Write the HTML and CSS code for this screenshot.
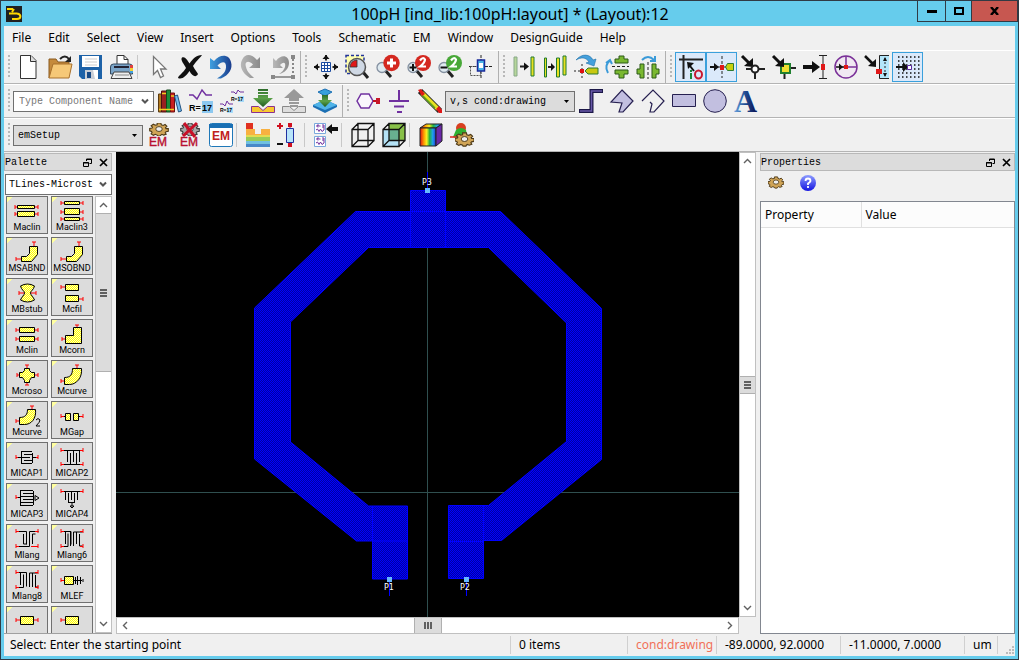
FILE: index.html
```html
<!DOCTYPE html>
<html lang="en">
<head>
<meta charset="utf-8">
<title>100pH [ind_lib:100pH:layout] * (Layout):12</title>
<link rel="stylesheet" href="styles.css">
</head>
<body>
<svg class="defs" width="0" height="0" aria-hidden="true">
  <defs>
    <pattern id="ydot" width="2" height="2" patternUnits="userSpaceOnUse"><rect width="2" height="2" fill="#fffcc0"/><path d="M0 0h1v1H0zM1 1h1v1H1z" fill="#ffff00"/></pattern>
    <linearGradient id="blueArrow" x1="0" x2="1"><stop offset="0" stop-color="#3fa0e0"/><stop offset="1" stop-color="#1a3c8c"/></linearGradient>
    <linearGradient id="grayArrow" x1="0" x2="1"><stop offset="0" stop-color="#b8b8b8"/><stop offset="1" stop-color="#8a8a8a"/></linearGradient>
    <linearGradient id="rainbow" x1="0" x2="1"><stop offset="0" stop-color="#e01010"/><stop offset=".25" stop-color="#ffa000"/><stop offset=".42" stop-color="#f8f020"/><stop offset=".6" stop-color="#20b040"/><stop offset=".8" stop-color="#20a0f0"/><stop offset="1" stop-color="#2030d0"/></linearGradient>
    <linearGradient id="greenDown" x1="0" x2="0" y1="0" y2="1"><stop offset="0" stop-color="#2c6b2a"/><stop offset=".5" stop-color="#5da34a"/><stop offset="1" stop-color="#1f5a1e"/></linearGradient>
    <linearGradient id="letterA" x1="0" x2="1"><stop offset="0" stop-color="#6aa6e0"/><stop offset=".5" stop-color="#204a90"/><stop offset="1" stop-color="#0a1050"/></linearGradient>
    <linearGradient id="helpBlue" x1="0" x2="0" y1="0" y2="1"><stop offset="0" stop-color="#8d9cff"/><stop offset="1" stop-color="#1414e0"/></linearGradient>
    <symbol id="gear" viewBox="0 0 20 14"><path d="M8 0h4l.5 2 2 .6 2-1 2 2-1.500 1.400.5 1H20v3l-2.500.5-.8 1 1 1.500-2.700 1-2-.8-1 .8-.5 1h-3l-.5-1-2-.8-2 1-2.500-1.500 1-1.500-.5-1L0 8.500V6l2.500-.5.5-1L1.500 3l2.500-1.700 2 1L8 2z" fill="#d0a456" stroke="#4d3a18" stroke-width="1.200"/><ellipse cx="10" cy="6.500" rx="3.500" ry="2.600" fill="#efefef" stroke="#4d3a18"/></symbol>
    <symbol id="float" viewBox="0 0 9 9"><path d="M3.500 3V1h5v4.500h-2M3 1.500h6" fill="none" stroke="#000"/><path d="M.5 4.500h5v4h-5zM0 5h6" fill="none" stroke="#000"/></symbol>
    <symbol id="cross" viewBox="0 0 9 9"><path d="M1 1l7 7M8 1L1 8" stroke="#000" stroke-width="1.700"/></symbol>
    <symbol id="up" viewBox="0 0 9 6"><path d="M1 5l3.500-3.500L8 5" fill="none" stroke="#606060" stroke-width="1.400"/></symbol>
    <symbol id="down" viewBox="0 0 9 6"><path d="M1 1l3.500 3.500L8 1" fill="none" stroke="#606060" stroke-width="1.400"/></symbol>
    <symbol id="zoomGlass" viewBox="0 0 24 24"><path d="M9 15l6 7" stroke="#222" stroke-width="3"/><circle cx="6" cy="12.500" r="5" fill="#dfeaf0" stroke="#8490a0" stroke-width="1.300"/></symbol>
    <symbol id="mini" viewBox="0 0 12 11"><path d="M.5.5h11v10H.5z" fill="#fff" stroke="#7aa8dc"/><path d="M2 3h2v-1.500v3M5 3h1.500M8 2h2M8 4h2M10 2v5M2 7l1.500-1L5 8.500 6.500 6 8 8.500 10 7" fill="none" stroke="#7030a0"/></symbol>
  </defs>
</svg>

<div class="window">
  <header class="titlebar">
    <svg class="appicon" width="16" height="16" viewBox="0 0 16 16"><path d="M0 0h16v16H0z" fill="#202020"/><path d="M1 3h6M3 7.500h8M8 3l-2 3M11 7.500c5 1 4 5.500 0 5.500H6" fill="none" stroke="#ffd800" stroke-width="2"/></svg>
    <h1 class="title">100pH [ind_lib:100pH:layout] * (Layout):12</h1>
    <div class="winbtns">
      <button class="wb min" aria-label="Minimize"><svg width="10" height="3"><path d="M0 0h10v3H0z"/></svg></button>
      <button class="wb max" aria-label="Maximize"><svg width="10" height="8"><path d="M1 1h8v6H1z" fill="none" stroke="#000" stroke-width="2"/></svg></button>
      <button class="wb close" aria-label="Close"><svg width="9" height="8"><path d="M1 0l7 8M8 0L1 8" stroke="#000" stroke-width="2.400"/></svg></button>
    </div>
  </header>

  <div class="client">
  <nav class="menubar">
    <button>File</button><button>Edit</button><button>Select</button><button>View</button><button>Insert</button><button>Options</button><button>Tools</button><button>Schematic</button><button>EM</button><button>Window</button><button>DesignGuide</button><button>Help</button>
  </nav>

  <div class="toolrow">
    <div class="group">
      <button class="tb" aria-label="New"><svg viewBox="0 0 24 24"><path d="M3.500.5H14l5 5v18H3.500z" fill="#fff" stroke="#333"/><path d="M13.500.5v6H19" fill="#ddd" stroke="#333"/></svg></button>
      <button class="tb" aria-label="Open"><svg viewBox="0 0 24 24"><path d="M1 23V4h7l2 3h11v4" fill="#c58a3c" stroke="#8a5a20"/><path d="M1 23l4-14h19l-3 14z" fill="#f6c877" stroke="#a8702c"/><path d="M12 4q5-5 9 0" fill="none" stroke="#222" stroke-width="2"/><path d="M23 1v6h-6z" fill="#222"/></svg></button>
      <button class="tb" aria-label="Save"><svg viewBox="0 0 24 24"><path d="M0 0h23v24H3l-3-3z" fill="#1d62a8"/><path d="M3 1h17v11H3z" fill="#fff"/><path d="M6 4h12M6 7h12M6 10h12" stroke="#ccc"/><path d="M6 15h13v9H6z" fill="#c9ced6"/><path d="M8 17h4v6H8z" fill="#174a86"/><path d="M14 15h5v9h-3z" fill="#fff"/></svg></button>
      <button class="tb" aria-label="Print"><svg viewBox="0 0 24 24"><path d="M7 10V.5h7l4 4V10" fill="#fff" stroke="#333"/><path d="M14 .5v4h4" fill="none" stroke="#333"/><path d="M.5 12q0-3 3-3h16q3 0 3 3v7H.5z" fill="#7aa4c8" stroke="#34495e"/><path d="M4 11h15v2H4z" fill="#223"/><path d="M20 10h3v3h-3z" fill="#e04040"/><path d="M20 13h3v3h-3z" fill="#f0d030"/><path d="M20 16h3v2h-3z" fill="#40a0e0"/><path d="M4 17h15l3 6.500H1z" fill="#eee" stroke="#444"/><path d="M5 20h14" stroke="#888"/></svg></button>
      <span class="sep"></span>
      <button class="tb" aria-label="Select"><svg viewBox="0 0 24 24"><path d="M6.500 1.500v18l4-4 3 7 3-1.500-3-7H19z" fill="#fff" stroke="#777" stroke-width="1.300"/></svg></button>
      <button class="tb" aria-label="Delete"><svg viewBox="0 0 24 24"><path d="M4 2.500c3-1.500 5 2 7.500 6C15 4 18 0 24 0c-1 2-5 5-9 11 2 4 4 6 5 8-2 4-6 2-8.500-3C8 21 4 25 0 23c0-2 5-5 8-10C6 9 2 5 4 2.500z" fill="#111"/></svg></button>
      <button class="tb" aria-label="Undo"><svg viewBox="0 0 24 24"><path d="M1 3v11h11L8.500 10.500c5-5 9-4 8.500 2-.5 5-4 8-9 11h4C20 20 24 14 22 7 20-1 11-1 5 6z" fill="url(#blueArrow)"/></svg></button>
      <button class="tb" aria-label="Redo"><svg viewBox="0 0 24 24"><path d="M20 2v11H9l4-3.500C9 5 4 6 6 12c1 5 5 8 8 11h-4C2 18-1 11 2 5 5-2 12-1 17 5z" fill="url(#grayArrow)"/></svg></button>
      <button class="tb" aria-label="Undo to point"><svg viewBox="0 0 24 24"><path d="M2 3v10h10L9 10c4-4 6-2 5 2-1 3-3 5-6 7 6-1 10-6 10-11C18 0 10-1 5 6z" fill="url(#grayArrow)"/><path d="M2 22h20" stroke="#999" stroke-width="2"/><path d="M22 4v18" stroke="#888" stroke-width="2" stroke-dasharray="2 2"/><path d="M0 20h4v4H0zM20 20h4v4h-4zM20 0h4v4h-4z" fill="#888"/></svg></button>
    </div>
    <div class="group">
      <button class="tb" aria-label="View all"><svg viewBox="0 0 24 24"><path d="M12 0v24M0 12h24" stroke="#222" stroke-width="2"/><path d="M8.500 4L12 0l3.500 4zM8.500 20l3.500 4 3.500-4zM4 8.500L0 12l4 3.500zM20 8.500l4 3.500-4 3.500z" fill="#111"/><path d="M5.500 5.500h13v13h-13z" fill="#efefef"/><path d="M7.500 7.500h9v9h-9zM10.500 7v10M13.500 7v10M7 10.500h10M7 13.500h10" fill="#fff" stroke="#1a4aa0"/></svg></button>
      <button class="tb" aria-label="Zoom area"><svg viewBox="0 0 24 24"><path d="M1 .5h18v18H1z" fill="#ffffb0" stroke="#223399" stroke-width="1.500" stroke-dasharray="3 2"/><path d="M18 17l5 6" stroke="#222" stroke-width="3"/><circle cx="12" cy="12" r="8.500" fill="#cfd8e4" stroke="#555" stroke-width="1.500"/><path d="M12 12V5a7 7 0 0 0-7 7z" fill="#e01818" stroke="#333" stroke-width=".8"/></svg></button>
      <button class="tb" aria-label="Zoom in"><svg viewBox="0 0 24 24"><use href="#zoomGlass"/><circle cx="15.500" cy="8" r="8.200" fill="#d42820"/><path d="M15.500 3.500v9M11 8h9" stroke="#fff" stroke-width="3"/></svg></button>
      <button class="tb" aria-label="Zoom in 2x"><svg viewBox="0 0 24 24"><use href="#zoomGlass"/><circle cx="16" cy="8" r="8" fill="#d42820"/><path d="M2.500 12.500h7M6 9v7" stroke="#111" stroke-width="2"/><path d="M13 5.500q3-4 5-1 0 3-5 7h6" fill="none" stroke="#fff" stroke-width="2.200"/></svg></button>
      <button class="tb" aria-label="Zoom out 2x"><svg viewBox="0 0 24 24"><use href="#zoomGlass"/><circle cx="16" cy="8" r="8" fill="#48a838"/><path d="M2.500 12.500h7" stroke="#111" stroke-width="2"/><path d="M13 5.500q3-4 5-1 0 3-5 7h6" fill="none" stroke="#fff" stroke-width="2.200"/></svg></button>
      <button class="tb" aria-label="Center on point"><svg viewBox="0 0 24 24"><path d="M12 0v24M0 11.500h24" stroke="#222" stroke-dasharray="3 1"/><path d="M1.500 11.500h10v9h-10z" fill="none" stroke="#555" stroke-dasharray="2 1"/><path d="M8.500 5h7v11h-7z" fill="#49b4e8" stroke="#1a2a9a" stroke-width="1.500"/><path d="M10 8h4v5h-4z" fill="#fff"/></svg></button>
    </div>
    <div class="group">
      <button class="tb" aria-label="Copy offset"><svg viewBox="0 0 24 24"><path d="M2 2h3v19H2z" fill="#b6d69a" stroke="#88a888"/><path d="M19 2h3v19h-3z" fill="#e8e020" stroke="#1f7a30"/><path d="M8 11.500h6" stroke="#222" stroke-width="2"/><path d="M12 7.500l5 4-5 4z" fill="#111"/></svg></button>
      <button class="tb" aria-label="Copy repeat"><svg viewBox="0 0 24 24"><path d="M1.500 3h2v19h-2zM13.500 3h3v19h-3zM20 1h3v19h-3z" fill="#e8e020" stroke="#1f7a30"/><path d="M5 12h5" stroke="#222" stroke-width="2"/><path d="M8 8l4 4-4 4z" fill="#111"/></svg></button>
      <button class="tb" aria-label="Rotate"><svg viewBox="0 0 24 24"><path d="M2 5C8-2 16-1 19 5l3-1-2 7-8-3 3-1C12 2 7 2 2 5z" fill="#45a0dc" stroke="#2070a8" stroke-width=".6"/><path d="M0 16h8M8 9v14" stroke="#222" stroke-dasharray="2 2"/><path d="M14 13h10v6H14l-3-3z" fill="#c8c810" stroke="#2d7a30"/><path d="M6 14h4v4H6z" fill="#e01010"/></svg></button>
      <button class="tb" aria-label="Mirror about X"><svg viewBox="0 0 24 24"><path d="M6 5C1 8 0 13 3 18M1 8l4-3 2 4" fill="none" stroke="#3a9ad8" stroke-width="2"/><path d="M7 11.500h17" stroke="#222" stroke-dasharray="3 2"/><path d="M10 4h4V1h5v3h4v4H10zM10 15h13v4h-4v4h-5v-4h-4z" fill="#7ab830" stroke="#2d5a18"/></svg></button>
      <button class="tb" aria-label="Mirror about Y"><svg viewBox="0 0 24 24"><path d="M6 5q6-6 12 0M19 1v5h-5" fill="none" stroke="#3a9ad8" stroke-width="2"/><path d="M12 7v17" stroke="#222" stroke-dasharray="3 2"/><path d="M4 9h4v14H4v-4H1v-5h3zM16 9h4v5h3v5h-3v4h-4z" fill="#7ab830" stroke="#2d5a18"/></svg></button>
    </div>
    <div class="group last">
      <button class="tb on" aria-label="Snap entry origin"><svg viewBox="0 0 24 24"><path d="M0 4.500h24M4.500 0v24" stroke="#222" stroke-width="2"/><path d="M15 16l-4-5" stroke="#111" stroke-width="2"/><path d="M8 7l7 1-6 6z" fill="#111"/><path d="M12 15v2M12 18v6" stroke="#18863a" stroke-width="2"/><ellipse cx="19.500" cy="19.500" rx="3.500" ry="4" fill="none" stroke="#c81830" stroke-width="2"/></svg></button>
      <button class="tb on" aria-label="Snap to pin"><svg viewBox="0 0 24 24"><path d="M12 1v22" stroke="#222" stroke-dasharray="3 2"/><path d="M0 12h24" stroke="#222"/><path d="M0 11h4V8l5 4-5 4v-3H0z" fill="#111"/><path d="M17.500 8.500h6v7h-6l-2-3.500z" fill="#c8d010" stroke="#2d7a30"/><path d="M10 10h4v5h-4z" fill="#e01818"/></svg></button>
      <button class="tb" aria-label="Snap to vertex"><svg viewBox="0 0 24 24"><path d="M14 14v10M5 14h19" stroke="#222" stroke-width="2"/><path d="M1 1l8 8" stroke="#111" stroke-width="3"/><path d="M12 12V3L3 11z" fill="#111"/><circle cx="14" cy="14" r="3.500" fill="#fff" stroke="#222" stroke-width="2"/></svg></button>
      <button class="tb" aria-label="Snap to edge"><svg viewBox="0 0 24 24"><path d="M12.500 14v10M12 13h12" stroke="#222" stroke-width="2"/><path d="M1 1l8 8" stroke="#111" stroke-width="3"/><path d="M9 9h9v9H9z" fill="#f0e030" stroke="#208030" stroke-width="2"/><path d="M12 12V3L3 11z" fill="#111"/></svg></button>
      <button class="tb" aria-label="Snap to midpoint"><svg viewBox="0 0 24 24"><path d="M16 .5h8M16 23.500h8M20 0v24" stroke="#222"/><path d="M0 10h9V6l8 6-8 6v-4H0z" fill="#111"/><path d="M18 9h4v6h-4z" fill="#e01818"/></svg></button>
      <button class="tb" aria-label="Snap to center"><svg viewBox="0 0 24 24"><circle cx="12" cy="12" r="11" fill="#f0e8f2" stroke="#7a3098" stroke-width="1.500"/><path d="M12 1v11h11" fill="none" stroke="#7a3098" stroke-width="1.500"/><path d="M2 12h8" stroke="#111" stroke-width="1.500"/><path d="M5 8.500l4 3.500-4 3.500z" fill="#111"/><path d="M10 10h4v4h-4z" fill="#e01818"/></svg></button>
      <button class="tb" aria-label="Snap to intersection"><svg viewBox="0 0 24 24"><path d="M24 .5h-9.500v23H24" fill="#b4e6fa" stroke="#222"/><path d="M20 3v18" stroke="#222" stroke-dasharray="2 2"/><path d="M18 6l2-4 2 4zM18 18l2 4 2-4z" fill="#111"/><path d="M0 1l8 8" stroke="#111" stroke-width="2.500"/><path d="M11 12V4L3 11z" fill="#111"/><path d="M11 14h6v5h-6z" fill="#e01818"/></svg></button>
      <button class="tb on" aria-label="Snap to grid"><svg viewBox="0 0 24 24"><path d="M2 1h22M2 5h22M2 9h22M2 13h22M2 17h22M2 21h22" transform="translate(0 1)" stroke="#111" stroke-width="1.500" stroke-dasharray="1.500 2.500"/><path d="M0 11h7V7l5 5-5 5v-4H0z" fill="#111"/><path d="M11.500 10.500h4v4h-4z" fill="#fff" stroke="#5a28a0"/></svg></button>
    </div>
  </div>

  <div class="toolrow">
    <div class="group">
      <select class="combo editable" aria-label="Component name"><option>Type Component Name</option></select>
      <button class="tb" aria-label="Library"><svg viewBox="0 0 24 24"><path d="M.5 5h3v18h-3z" fill="#b07820" stroke="#5a3a10"/><path d="M3.500 2h5v21h-5z" fill="#9a2020" stroke="#4a1010"/><path d="M8.500 1h4v22h-4z" fill="#1a8a38" stroke="#104818"/><path d="M12.500 4h4v19h-4z" fill="#c82020" stroke="#701010"/><path d="M16.500 7l3-1 4 16-3 1z" fill="#70bcec" stroke="#205080"/><path d="M4 4.500h4M13 7h3M1 20.500h15" stroke="#f0d020" stroke-width="1.500"/></svg></button>
      <button class="tb" aria-label="Parameter labels"><svg viewBox="0 0 24 24"><path d="M0 6h4l4 4 5-9 4 5h6" fill="none" stroke="#7030a0" stroke-width="1.500"/><path d="M13 12h11v12H13z" fill="#8cc8f0"/><text x="0" y="22" class="t9">R=</text><text x="13" y="22" class="t9">17</text></svg></button>
      <button class="tb" aria-label="Swap labels"><svg viewBox="0 0 24 24"><path d="M11 3h3l2 2 2-4 2 2h4M0 15h3l2 2 2-5 2 3h4" fill="none" stroke="#7030a0"/><path d="M18 7h6v6h-6zM7 18h6v6H7z" fill="#a8dcf8"/><text x="11" y="12" class="t6">R=17</text><text x="0" y="23" class="t6">R=17</text></svg></button>
      <button class="tb" aria-label="Push into hierarchy"><svg viewBox="0 0 24 24"><path d="M.5 17.500h7l4.500 4 4.500-4h7v6H.5z" fill="#f8c830" stroke="#8a3090"/><path d="M7 0h10v2H7zM7 3h10v2H7zM7 6h10v3h5L12 18 2 9h5z" fill="url(#greenDown)"/></svg></button>
      <button class="tb" aria-label="Pop out of hierarchy"><svg viewBox="0 0 24 24"><path d="M.5 17.500h7l4.500 4 4.500-4h7v6H.5z" fill="#ddd" stroke="#888"/><path d="M12 0l10 9h-5v3H7V9H2zM7 13h10v2H7zM8 16h8v2H8z" fill="#999"/></svg></button>
      <button class="tb" aria-label="Insert substrate"><svg viewBox="0 0 24 24"><path d="M0 16l9-4h6l9 4v2l-12 6L0 18z" fill="#1c70b4"/><path d="M0 16l9-4h6l9 4-12 5z" fill="#50b4e8"/><path d="M5 3l7-3 7 3-7 4z" fill="#38a0dc" stroke="#1c70b4"/><path d="M9 6h6v5h4l-7 7-7-7h4z" fill="url(#greenDown)"/></svg></button>
    </div>
    <div class="group last">
      <button class="tb" aria-label="Insert pin"><svg viewBox="0 0 24 24"><path d="M1 12l4-7h8l4 7-4 7H5z" fill="#faf6fc" stroke="#7030a0" stroke-width="1.500"/><path d="M17 12h7" stroke="#c01020" stroke-width="2"/><path d="M20 9h4v6h-4z" fill="#c81828"/></svg></button>
      <button class="tb" aria-label="Insert ground"><svg viewBox="0 0 24 24"><path d="M12 1v10M2 12h20M7 17.500h10M10 23h5" stroke="#7030a0" stroke-width="2"/></svg></button>
      <button class="tb" aria-label="Insert trace"><svg viewBox="0 0 24 24"><path d="M2 2l20 20" stroke="#222" stroke-width="6"/><path d="M4 4l16 16" stroke="#e8e020" stroke-width="4"/><path d="M4 6l13 13" stroke="#58a020" stroke-width="1.500"/><path d="M0 1l3-1 4 5-3 2zM18 20l3-3 3 4v3h-3z" fill="#e01818"/></svg></button>
      <select class="combo gray" aria-label="Entry layer"><option>v,s cond:drawing</option></select>
      <button class="tb" aria-label="Insert path"><svg viewBox="0 0 24 24"><path d="M0 22h12.500V2H24" fill="none" stroke="#1c1848" stroke-width="4"/><path d="M1 22h11.500V2H23" fill="none" stroke="#6858a8" stroke-width="1.500"/></svg></button>
      <button class="tb" aria-label="Insert polygon"><svg viewBox="0 0 24 24"><path d="M12 1l11 11-10 11H9l3-9-11-1z" fill="#c2bfe0" stroke="#262050" stroke-width="1.200"/></svg></button>
      <button class="tb" aria-label="Insert polyline"><svg viewBox="0 0 24 24"><path d="M1 12L12 1l11 11-10 11H9l2-8-2-2" fill="none" stroke="#262050" stroke-width="1.200"/></svg></button>
      <button class="tb" aria-label="Insert rectangle"><svg viewBox="0 0 24 24"><path d="M.5 5.500h23v12H.5z" fill="#c2bfe0" stroke="#262050"/></svg></button>
      <button class="tb" aria-label="Insert circle"><svg viewBox="0 0 24 24"><circle cx="12" cy="12" r="11.300" fill="#c2bfe0" stroke="#262050"/></svg></button>
      <button class="tb" aria-label="Insert text"><svg viewBox="0 0 24 24"><text x="0" y="23" class="tA">A</text></svg></button>
    </div>
  </div>

  <div class="toolrow">
    <div class="group last">
      <select class="combo gray" aria-label="EM setup"><option>emSetup</option></select>
      <button class="tb" aria-label="EM setup"><svg viewBox="0 0 24 24"><use href="#gear" x="2" y="0" width="20" height="13"/><text x="2" y="23" class="tEM">EM</text></svg></button>
      <button class="tb" aria-label="Stop EM"><svg viewBox="0 0 24 24"><use href="#gear" class="dim" x="2" y="0" width="20" height="13"/><path d="M6 0l11 14M19 0L5 13" stroke="#c81028" stroke-width="3"/><text x="2" y="23" class="tEM">EM</text></svg></button>
      <button class="tb" aria-label="EM results"><svg viewBox="0 0 24 24"><rect x=".5" y=".5" width="23" height="23" rx="2" fill="#fff" stroke="#1f78b8"/><path d="M0 1h24v4H0z" fill="#1a70b4"/><text x="3" y="17" class="tEMb">EM</text></svg></button>
      <span class="sep"></span>
      <button class="tb" aria-label="Substrate"><svg viewBox="0 0 24 24"><path d="M0 0h7v6H0z" fill="#e03020"/><path d="M0 6h9v5h6V6h9v8H0z" fill="#f8b040"/><path d="M0 12h24v2H0z" fill="#e4dc50"/><path d="M0 14h24v4H0z" fill="#98cc58"/><path d="M0 18h24v3H0z" fill="#70c0e0"/><path d="M0 21h24v3H0z" fill="#4888c8"/></svg></button>
      <button class="tb" aria-label="Ports"><svg viewBox="0 0 24 24"><path d="M0 3h6M3 0v6" stroke="#d01020" stroke-width="2"/><path d="M0 21h6" stroke="#111" stroke-width="2"/><path d="M13 0v24" stroke="#c02030"/><path d="M9.500 5.500h7v14h-7z" fill="#b8e4fa" stroke="#2030a0"/><path d="M11 0h4v4h-4zM11 20h4v4h-4z" fill="#d01020"/></svg></button>
      <span class="sep"></span>
      <button class="tb" aria-label="Create model"><svg viewBox="0 0 24 24"><use href="#mini" x="0" y="0" width="12" height="11"/><use href="#mini" x="0" y="13" width="12" height="11"/><path d="M12 6l6-5v3h6v4h-6v3z" fill="#111"/></svg></button>
      <span class="sep"></span>
      <button class="tb" aria-label="3D wireframe"><svg viewBox="0 0 24 24"><path d="M1 6.500h16v17H1zM7 .5h16v17H7zM1 6.500l6-6M17 6.500l6-6M1 23.500l6-6M17 23.500l6-6" fill="none" stroke="#111" stroke-width="1.300"/></svg></button>
      <button class="tb" aria-label="3D shaded"><svg viewBox="0 0 24 24"><path d="M7 .5h16v17h-6v-11H7z" fill="#88c048"/><path d="M1 6.500h16v17H1z" fill="#b4e2f6"/><path d="M7 6.500h10v11H7z" fill="#68b090"/><path d="M1 6.500h16v17H1zM7 .5h16v17H7zM1 6.500l6-6M17 6.500l6-6M1 23.500l6-6M17 23.500l6-6" fill="none" stroke="#111" stroke-width="1.300"/></svg></button>
      <span class="sep"></span>
      <button class="tb" aria-label="Field view"><svg viewBox="0 0 24 24"><path d="M1 5l6-4h16l-6 4z" fill="url(#rainbow)" stroke="#222"/><path d="M1 5h16v18H1z" fill="url(#rainbow)" stroke="#222"/><path d="M17 5l6-4v17l-6 5z" fill="#6a28a8" stroke="#222"/></svg></button>
      <button class="tb" aria-label="Far field"><svg viewBox="0 0 24 24"><circle cx="11" cy="5" r="5" fill="#d84020"/><path d="M6 7q5-4 10 0l1 6q-6 5-14 1z" fill="#30b030"/><path d="M0 14h8" stroke="#e02020" stroke-width="1.500"/><use href="#gear" x="5" y="9" width="19" height="15"/></svg></button>
    </div>
  </div>

  <main class="work">
    <aside class="palette">
      <div class="dockhead"><h2>Palette</h2><button aria-label="Float palette"><svg width="9" height="9"><use href="#float"/></svg></button><button aria-label="Close palette"><svg width="9" height="9"><use href="#cross"/></svg></button></div>
      <select class="combo lib" aria-label="Palette library"><option>TLines-Microst</option></select>
      <div class="palbody">
        <div class="cells">
          <button class="cell"><svg viewBox="0 0 40 24"><path class="r" d="M8 7v4M8 9h3M8 14v4M8 16h3M31 7v4M31 9h-3M31 14v4M31 16h-3"/><path class="y" d="M10.500 7.500h17v3h-17zM10.500 13.500h17v5h-17z"/></svg>Maclin</button>
          <button class="cell"><svg viewBox="0 0 40 24"><path class="r" d="M9 3v4M9 5h3M9 12v4M9 14h3M9 19v4M9 21h3M31 3v4M31 5h-3M31 12v4M31 14h-3M31 19v4M31 21h-3"/><path class="y" d="M12.500 3.500h15v3h-15zM12.500 10.500h15v6h-15zM12.500 19.500h15v3h-15z"/></svg>Maclin3</button>
          <button class="cell"><svg viewBox="0 0 40 24"><path class="r" d="M9 18v4M9 20h5M25 3h4M27 3v4"/><path class="y" d="M22.500 7.500h8v8l-6 7h-10v-5h5l3-3z"/></svg>MSABND</button>
          <button class="cell"><svg viewBox="0 0 40 24"><path class="r" d="M9 18v4M9 20h5M25 3h4M27 3v4"/><path class="y" d="M22.500 7.500h8v8l-6 7h-10v-5h5l3-3z"/></svg>MSOBND</button>
          <button class="cell"><svg viewBox="0 0 40 24"><path class="y" d="M13.500 6q7-4 14 0c-1 4-4 5-4 7s3 4 4 7q-7 4-14 0c1-3 4-5 4-7s-3-3-4-7z"/><path class="r" d="M12 11v4M12 13h5M29 11v4M29 13h-5"/></svg>MBstub</button>
          <button class="cell"><svg viewBox="0 0 40 24"><path class="r" d="M9 5v4M9 7h4M31 17v4M31 19h-4"/><path class="y" d="M13.500 4.500h13v6h-13zM13.500 15.500h13v6h-13z"/></svg>Mcfil</button>
          <button class="cell"><svg viewBox="0 0 40 24"><path class="r" d="M9 7v4M9 9h4M9 16v4M9 18h4M31 7v4M31 9h-4M31 16v4M31 18h-4"/><path class="y" d="M12.500 6.500h15v5h-15zM12.500 15.500h15v5h-15z"/></svg>Mclin</button>
          <button class="cell"><svg viewBox="0 0 40 24"><path class="r" d="M10 16v4M10 18h4M23 4h4M25 4v3"/><path class="y" d="M21.500 6.500h8v16h-16v-8h8z"/></svg>Mcorn</button>
          <button class="cell"><svg viewBox="0 0 40 24"><path class="r" d="M10 11v4M10 13h4M31 11v4M31 13h-4M18 3h4M20 3v4M18 23h4M20 23v-3"/><path class="y" d="M17.500 6.500h5v2l2 2h3v5h-3l-2 3v2h-5v-2l-2-3h-3v-5h3l2-2z"/></svg>Mcroso</button>
          <button class="cell"><svg viewBox="0 0 40 24"><path class="r" d="M9 17v4M9 19h4M23 3h4M25 3v4"/><path class="y" d="M20.500 6.500h9c1 9-5 16-12 16h-5v-7c6 0 8-3 8-9z"/></svg>Mcurve</button>
          <button class="cell"><svg viewBox="0 0 40 24"><path class="r" d="M9 16v4M9 18h4M23 3h4M25 3v4"/><path class="y" d="M20.500 6.500h8c1 9-4 15-11 15h-5v-7c6 0 8-3 8-8z"/><path class="k" d="M29 17q2-3 4 0 0 2-4 6h4"/></svg>Mcurve</button>
          <button class="cell"><svg viewBox="0 0 40 24"><path class="k" d="M10 13.500h20"/><path class="r" d="M9 11v4M9 13.500h3M31 11v4M31 13.500h-3"/><path class="y" d="M13.500 10.500h5v7h-5zM21.500 10.500h5v7h-5z"/><path d="M19 13h2v1h-2z" fill="#dcdcdc"/></svg>MGap</button>
          <button class="cell"><svg viewBox="0 0 40 24"><path class="k" d="M9 13.500h5M14.500 7v13M14 7.500h11M14 13.500h9M14 19.500h11M17 10.500h9M17 16.500h9M25.500 9v10M25 13.500h6"/><path class="r" d="M9 11v4M9 13.500h2M31 11v4M31 13.500h-2"/></svg>MICAP1</button>
          <button class="cell"><svg viewBox="0 0 40 24"><path class="k" d="M10 6.500h20M10 20.500h20M15.500 6v12M18.500 9v12M21.500 6v12M24.500 9v12M27.500 6v12"/><path class="r" d="M9 4v4M9 6.500h3M31 4v4M31 6.500h-3M9 18v4M9 20.500h3M31 18v4M31 20.500h-3"/></svg>MICAP2</button>
          <button class="cell"><svg viewBox="0 0 40 24"><path class="k" d="M9 12.500h5M13.500 6v14M13 5.500h13M13 11.500h13M13 17.500h13M16 8.500h11M16 14.500h11M13 20.500h13M26.500 6v14M28 10.500v5l4-2.500z"/><path class="r" d="M9 10v4M9 12.500h2"/></svg>MICAP3</button>
          <button class="cell"><svg viewBox="0 0 40 24"><path class="k" d="M10 6.500h20M13.500 6v9M16.500 8v9M19.500 6v9M22.500 8v9M25.500 6v9M16 17.500h7M20 17v4M18 21h4l-2 2z"/><path class="r" d="M9 4v4M9 6.500h3M31 4v4M31 6.500h-3"/></svg>MICAP4</button>
          <button class="cell"><svg viewBox="0 0 40 24"><path class="k" d="M10 5.500h9.500v13M10 20.500h12.500v-15h9M16.500 8v10h3M25.500 18v-10h3"/><path class="r" d="M9 3v4M9 5.500h3M31 3v4M31 5.500h-3M9 18v4M9 20.500h3M31 18v4M31 20.500h-7"/></svg>Mlang</button>
          <button class="cell"><svg viewBox="0 0 40 24"><path class="k" d="M10 5.500h9v13M10 20.500h6v-13M21.500 20v-14h9M18.500 6v14M24.500 6v12M27.500 8v12h3M13.500 6v12"/><path class="r" d="M9 3v4M9 5.500h3M31 3v4M31 5.500h-3M9 18v4M9 20.500h3M31 18v4M31 20.500h-3"/></svg>Mlang6</button>
          <button class="cell"><svg viewBox="0 0 40 24"><path class="k" d="M10 5.500h9.500v14M10 20.500h6.500v-13M22.500 20v-14h8M25.500 6v14M28.500 8v12h3M13.500 6v12"/><path class="r" d="M9 3v4M9 5.500h3M31 3v4M31 5.500h-3M9 18v4M9 20.500h3M31 18v4M31 20.500h-3"/></svg>Mlang8</button>
          <button class="cell"><svg viewBox="0 0 40 24"><path class="k" d="M10 13.500h20M23.500 10v7M25.500 9v9M28.500 10v7M31 12v3"/><path class="r" d="M9 11v4M9 13.500h3"/><path class="y" d="M12.500 9.500h9v8h-9z"/></svg>MLEF</button>
          <button class="cell"><svg viewBox="0 0 40 24"><path class="r" d="M9 10v4M9 12h4M31 10v4M31 12h-4"/><path class="y" d="M13.500 8.500h13v8h-13z"/></svg>MLIN</button>
          <button class="cell"><svg viewBox="0 0 40 24"><path class="r" d="M9 10v4M9 12h4"/><path class="y" d="M13.500 8.500h13v8h-13z"/></svg>MLOC</button>
        </div>
        <div class="vscroll pal"><button aria-label="Scroll up"><svg width="9" height="6"><use href="#up"/></svg></button><div class="thumb"></div><button aria-label="Scroll down"><svg width="9" height="6"><use href="#down"/></svg></button></div>
      </div>
    </aside>

    <section class="view">
      <svg class="canvas" viewBox="0 0 623 465" preserveAspectRatio="xMidYMid slice">
        <defs><pattern id="chk" width="2" height="2" patternUnits="userSpaceOnUse"><path d="M0 0h2v2H0z" fill="#0000a0"/><path d="M0 0h1v1H0zM1 1h1v1H1z" fill="#0000ff"/></pattern></defs>
        <path d="M311.500 0v465M0 340.500h623" stroke="#2f4f4f"/>
        <path d="M294.500 38.500h35v21h55l101 97v151l-100 81h-18v38h-35v-73h40l78-64V171L372.500 95.500h-120L174.500 170v120l78 64h39v73h-35v-38h-16l-102-82V156l101-96.500h55z" fill="url(#chk)" stroke="#0000ff"/>
        <path d="M294.500 59.500h35M294.500 59v36M329.500 59v36M256.500 354v35h35M332 389.500h35.500V354" fill="none" stroke="#0000ff"/>
        <path d="M311.500 20v18M273.500 428v16M350.500 428v16" stroke="#0000ff"/>
        <path d="M309 36h5v5h-5zM271 425h5v5h-5zM348 425h5v5h-5z" fill="#66b8ff"/>
        <text x="306" y="33">P3</text><text x="268" y="438">P1</text><text x="344" y="438">P2</text>
      </svg>
      <div class="vscroll"><button aria-label="Scroll up"><svg width="9" height="6"><use href="#up"/></svg></button><span class="track"><span class="thumb"></span></span><button aria-label="Scroll down"><svg width="9" height="6"><use href="#down"/></svg></button></div>
      <div class="hscroll"><button aria-label="Scroll left"><svg width="6" height="9"><path d="M5 1L1.500 4.500 5 8" fill="none" stroke="#606060" stroke-width="1.400"/></svg></button><span class="track"><span class="thumb"></span></span><button aria-label="Scroll right"><svg width="6" height="9"><path d="M1 1l3.500 3.500L1 8" fill="none" stroke="#606060" stroke-width="1.400"/></svg></button></div>
    </section>

    <aside class="props">
      <div class="dockhead"><h2>Properties</h2><button aria-label="Float properties"><svg width="9" height="9"><use href="#float"/></svg></button><button aria-label="Close properties"><svg width="9" height="9"><use href="#cross"/></svg></button></div>
      <div class="proptools">
        <button aria-label="Settings"><svg width="16" height="16"><use href="#gear" x="0" y="1" width="16" height="13"/></svg></button>
        <button aria-label="Help"><svg width="16" height="16" viewBox="0 0 16 16"><circle cx="8" cy="8" r="8" fill="url(#helpBlue)"/><path d="M5.500 6q0-2.500 2.500-2.500T10.500 6Q10 7.500 8 8.500V10M8 11v2" fill="none" stroke="#fff" stroke-width="1.800"/></svg></button>
      </div>
      <div class="tablebox">
        <table><thead><tr><th class="pcol">Property</th><th>Value</th></tr></thead></table>
      </div>
    </aside>
  </main>

  <footer class="status">
    <span>Select: Enter the starting point</span>
    <span>0 items</span>
    <span class="layer">cond:drawing</span>
    <span>-89.0000, 92.0000</span>
    <span>-11.0000, 7.0000</span>
    <span>um</span>
    <span class="grip"><svg width="8" height="8"><path d="M6 0h2v2H6zM3 3h2v2H3zM6 3h2v2H6zM0 6h2v2H0zM3 6h2v2H3zM6 6h2v2H6z" fill="#bbb"/></svg></span>
  </footer>
  </div>
</div>
</body>
</html>
```
FILE: styles.css
```css
* { box-sizing: border-box; }
html, body { height: 100%; margin: 0; }
body { font: 12px/16px "Noto Sans", sans-serif; color: #000; overflow: hidden; }
button { font: inherit; color: inherit; padding: 0; margin: 0; border: 0; background: none; }
.defs { position: absolute; }

.window { height: 100vh; display: flex; flex-direction: column; background: #66ccec; border: 1px solid #303a44; }
.titlebar { height: 25px; display: flex; align-items: center; padding-left: 5px; }
.title { flex: 1; margin: 0; padding-left: 80px; text-align: center; font-size: 16px; line-height: 24px; font-weight: 400; }
.winbtns { display: flex; align-self: flex-start; }
.wb { height: 21px; border: 1px solid #303a44; border-top: 0; margin-left: -1px; display: grid; place-items: center; }
.wb.min { width: 29px; }
.wb.max { width: 27px; }
.wb.close { width: 47px; background: #c75750; }
.client { flex: 1; min-height: 0; margin: 0 3px 3px; display: flex; flex-direction: column; background: #f0f0f0; }

.menubar { height: 24px; display: flex; align-items: center; gap: 17px; padding-left: 8px; }

.toolrow { height: 34px; display: flex; border-top: 1px solid #fff; border-bottom: 1px solid #b4b4b4; }
.group { position: relative; display: flex; align-items: center; padding: 0 2px 0 9px; border-right: 1px solid #b0b0b0; }
.group.last { border-right: 0; flex: 1; }
.group::before { content: ""; position: absolute; left: 4px; top: 4px; bottom: 4px; width: 2px; background: repeating-linear-gradient(#b8b8b8 0 2px, transparent 2px 4px); }
.tb { width: 31px; height: 30px; display: grid; place-items: center; border: 1px solid transparent; }
.tb svg { width: 24px; height: 24px; display: block; overflow: visible; }
.tb.on { background: #dbe9fa; border-color: #3aa0dc; }
.sep { width: 6px; height: 24px; border-left: 1px solid #c8c8c8; border-right: 5px solid transparent; }
.dim { filter: grayscale(1); }
.t9 { font: bold 9px "Liberation Sans", sans-serif; }
.t6 { font: bold 5px "Liberation Sans", sans-serif; }
.tA { font: bold 32px "Liberation Serif", serif; fill: url(#letterA); }
.tEM { font: 12px "Liberation Sans", sans-serif; fill: #b81030; stroke: #b81030; stroke-width: .4; }
.tEMb { font: bold 12px "Liberation Sans", sans-serif; fill: #c02020; }

.combo { appearance: none; height: 21px; margin: 0; padding: 2px 5px 0; border: 1px solid #707070; border-radius: 0; color: #000; font: 10px/16px "Liberation Mono", monospace; background-repeat: no-repeat; }
.combo.editable { width: 141px; color: #777; background-color: #fff; background-position: right 4px center; background-image: url("data:image/svg+xml,%3Csvg xmlns='http://www.w3.org/2000/svg' width='8' height='7'%3E%3Cpath d='M1 1.500l3 3 3-3' fill='none' stroke='%23555' stroke-width='2'/%3E%3C/svg%3E"); }
.combo.gray { width: 130px; padding-left: 4px; background-color: #dcdcdc; background-position: right 4px center; background-image: url("data:image/svg+xml,%3Csvg xmlns='http://www.w3.org/2000/svg' width='6' height='3'%3E%3Cpath d='M0 0h5L2.500 3z'/%3E%3C/svg%3E"); }
.combo.lib { width: 107px; margin: 3px 0 1px 1px; padding: 1px 3px 0; background-color: #fff; background-position: right 4px center; background-image: url("data:image/svg+xml,%3Csvg xmlns='http://www.w3.org/2000/svg' width='8' height='7'%3E%3Cpath d='M1 1.500l3 3 3-3' fill='none' stroke='%23555' stroke-width='2'/%3E%3C/svg%3E"); }

.work { flex: 1; min-height: 0; display: flex; }
.dockhead { height: 18px; display: flex; align-items: center; gap: 7px; padding: 0 3px 0 0; background: #dcdcdc; border: 1px solid #b8b8b8; }
.dockhead h2 { flex: 1; margin: 0; padding-top: 2px; font: 10px/14px "Liberation Mono", monospace; }
.dockhead svg, .vscroll svg, .hscroll svg, .proptools svg { display: block; }

.palette { width: 108px; padding-top: 1px; display: flex; flex-direction: column; }
.palbody { flex: 1; min-height: 0; display: flex; justify-content: space-between; padding-left: 2px; border-bottom: 1px solid #a0a0a0; }
.cells { display: grid; grid-template-columns: 42px 42px; grid-auto-rows: 38px; gap: 3px; overflow: hidden; }
.cell { border: 1px solid #707070; background: linear-gradient(135deg, #ffffa0 0 4px, transparent 4px) #dcdcdc; font: 9px/10px Roboto, sans-serif; text-align: center; overflow: hidden; }
.cell svg { display: block; width: 40px; height: 24px; }
.y { fill: url(#ydot); stroke: #000; }
.r { fill: none; stroke: #ff0000; }
.k { fill: none; stroke: #000; }

.vscroll { width: 17px; display: flex; flex-direction: column; background: #fff; border: 1px solid #c0c0c0; }
.vscroll button { height: 16px; display: grid; place-items: center; background: #fff; }
.vscroll .thumb, .hscroll .thumb { display: block; }
.vscroll .thumb { border: solid #b0b0b0; border-width: 1px 0; background: repeating-linear-gradient(#606060 0 2px, #dcdcdc 2px 3px) center / 7px 8px no-repeat #dcdcdc; }
.vscroll.pal .thumb { height: 159px; margin-bottom: auto; }
.track { flex: 1; display: grid; place-items: center stretch; }
.vscroll .track .thumb { height: 18px; }

.view { flex: 1; min-width: 0; margin-left: 4px; display: grid; grid-template: minmax(0, 1fr) 17px / minmax(0, 1fr) 17px; }
.canvas { width: 100%; height: 100%; background: #000; }
.canvas text { font: 8px "DejaVu Sans", sans-serif; fill: #fff; }
.hscroll { display: flex; background: #fff; border: 1px solid #c0c0c0; }
.hscroll button { width: 16px; display: grid; place-items: center; }
.hscroll .track { place-items: stretch center; }
.hscroll .thumb { width: 28px; border: solid #b0b0b0; border-width: 0 1px; background: repeating-linear-gradient(90deg, #606060 0 2px, #dcdcdc 2px 3px) center / 8px 7px no-repeat #dcdcdc; }

.props { width: 255px; margin-left: 4px; padding-top: 1px; display: flex; flex-direction: column; }
.proptools { height: 30px; display: flex; gap: 16px; padding: 4px 8px; align-items: flex-start; }
.tablebox { flex: 1; background: #fff; border: 1px solid #828790; }
table { width: 100%; border-collapse: collapse; }
th { height: 25px; padding: 1px 4px 0; text-align: left; font-weight: 400; background: #fcfcfc; border-bottom: 1px solid #e0e0e0; }
.pcol { width: 100px; border-right: 1px solid #e0e0e0; }

.status { height: 22px; display: grid; grid-template-columns: 1fr 117px 89px 124px 124px 33px 18px; align-items: center; }
.status span { height: 18px; line-height: 18px; padding-left: 8px; border-left: 1px solid #d0d0d0; white-space: nowrap; }
.status span:first-child { border: 0; padding-left: 6px; }
.status .layer { color: #f07058; }
.status .grip { display: flex; align-items: flex-end; }
```
